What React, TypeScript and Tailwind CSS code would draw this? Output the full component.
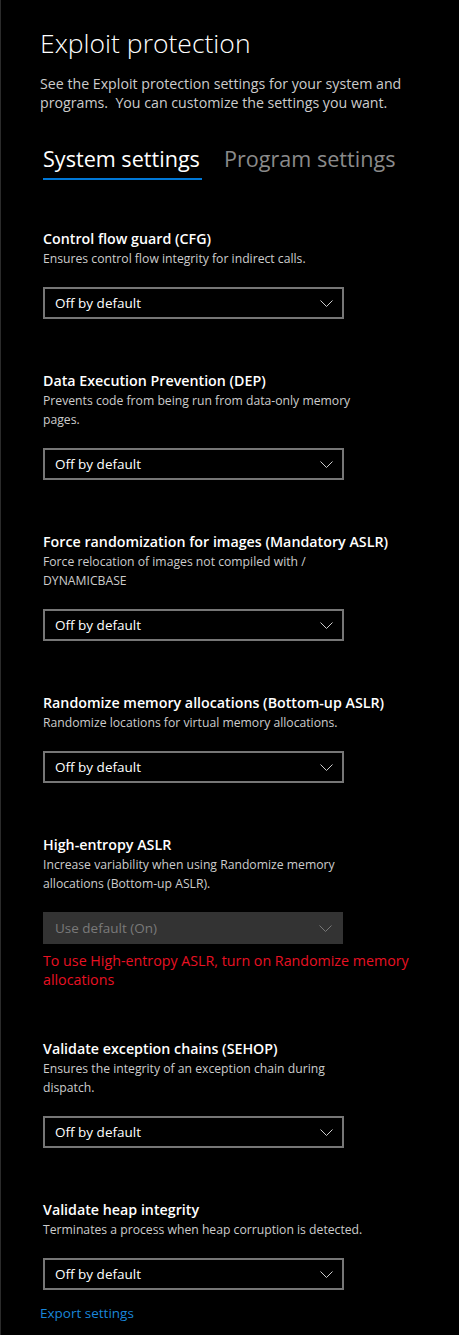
import React from 'react';

// Section data for the system settings tab
interface Mitigation {
  title: string;
  desc: string;
  value: string;
  disabled?: boolean;
  error?: string;
}

const mitigations: Mitigation[] = [
  {
    title: 'Control flow guard (CFG)',
    desc: 'Ensures control flow integrity for indirect calls.',
    value: 'Off by default',
  },
  {
    title: 'Data Execution Prevention (DEP)',
    desc: 'Prevents code from being run from data-only memory\npages.',
    value: 'Off by default',
  },
  {
    title: 'Force randomization for images (Mandatory ASLR)',
    desc: 'Force relocation of images not compiled with /\nDYNAMICBASE',
    value: 'Off by default',
  },
  {
    title: 'Randomize memory allocations (Bottom-up ASLR)',
    desc: 'Randomize locations for virtual memory allocations.',
    value: 'Off by default',
  },
  {
    title: 'High-entropy ASLR',
    desc: 'Increase variability when using Randomize memory\nallocations (Bottom-up ASLR).',
    value: 'Use default (On)',
    disabled: true,
    error: 'To use High-entropy ASLR, turn on Randomize memory\nallocations',
  },
  {
    title: 'Validate exception chains (SEHOP)',
    desc: 'Ensures the integrity of an exception chain during\ndispatch.',
    value: 'Off by default',
  },
  {
    title: 'Validate heap integrity',
    desc: 'Terminates a process when heap corruption is detected.',
    value: 'Off by default',
  },
];

const Chevron: React.FC<{ className?: string }> = ({ className }) => (
  <svg width="13" height="7" viewBox="0 0 13 7" className={className} fill="none">
    <path d="M0.5 0.5 L6.5 6.5 L12.5 0.5" stroke="currentColor" strokeWidth="1" />
  </svg>
);

const Dropdown: React.FC<{ value: string; disabled?: boolean }> = ({ value, disabled }) => (
  <div
    className={
      disabled
        ? 'flex h-[32px] w-[300px] items-center justify-between bg-[#333333] pl-[12px] pr-[11px] text-[#7a7a7a]'
        : 'flex h-[32px] w-[301px] items-center justify-between border-2 border-[#767676] pl-[10px] pr-[9px] text-white'
    }
  >
    <span className="text-[13.5px] leading-[20px]">{value}</span>
    <Chevron className={disabled ? 'text-[#777777]' : 'text-[#cccccc]'} />
  </div>
);

const Section: React.FC<{ item: Mitigation }> = ({ item }) => (
  <div className={item.error ? 'mb-[-2px] flex flex-col' : 'flex flex-col'}>
    <h3 className="text-[14.25px] font-semibold leading-[20px] text-white">{item.title}</h3>
    <p className="whitespace-pre-line text-[12.2px] leading-[19px] text-[#cccccc]">{item.desc}</p>
    <div className="mt-[19px]">
      <Dropdown value={item.value} disabled={item.disabled} />
    </div>
    {item.error && (
      <p className="mt-[7px] whitespace-pre-line text-[14.25px] leading-[19px] text-[#e81123]">{item.error}</p>
    )}
  </div>
);

export default function App() {
  return (
    <div
      className="min-h-[1335px] w-[459px] border-l border-[#2b2b2b] bg-black pl-[39px]"
      style={{ fontFamily: '"Open Sans", "Noto Sans", sans-serif' }}
    >
      <h1 className="pt-[24px] text-[26.5px] font-light leading-[38px] text-white">Exploit protection</h1>
      <p className="mt-[12px] text-[14.2px] leading-[19px] text-[#cccccc]">
        See the Exploit protection settings for your system and
        <br />
        programs.&nbsp; You can customize the settings you want.
      </p>

      <div className="ml-[3px] mt-[32px] flex gap-[22px]">
        <div className="flex flex-col">
          <span className="text-[21.6px] leading-[29px] text-white">System settings</span>
          <div className="mt-[5px] h-[2px] w-[159px] bg-[#0078d7]" />
        </div>
        <span className="text-[21.6px] leading-[29px] text-[#8a8a8a]">Program settings</span>
      </div>

      <div className="ml-[3px] mt-[49px] flex flex-col gap-[52px]">
        {mitigations.map((m) => (
          <Section key={m.title} item={m} />
        ))}
      </div>

      <a className="mt-[13px] block text-[13.5px] leading-[20px] text-[#1a86d9]" href="#">
        Export settings
      </a>
    </div>
  );
}
